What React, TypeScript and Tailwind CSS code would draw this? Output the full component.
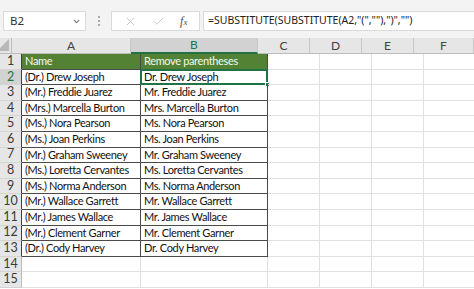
import { Check, X, ChevronDown } from "lucide-react";

const cols = [
  { key: "A", w: "w-[119px]" },
  { key: "B", w: "w-[127px]" },
  { key: "C", w: "w-[52px]" },
  { key: "D", w: "w-[52px]" },
  { key: "E", w: "w-[52px]" },
  { key: "F", w: "w-[60px]" },
];

const names = [
  ["Name", "Remove parentheses"],
  ["(Dr.) Drew Joseph", "Dr. Drew Joseph"],
  ["(Mr.) Freddie Juarez", "Mr. Freddie Juarez"],
  ["(Mrs.) Marcella Burton", "Mrs. Marcella Burton"],
  ["(Ms.) Nora Pearson", "Ms. Nora Pearson"],
  ["(Ms.) Joan Perkins", "Ms. Joan Perkins"],
  ["(Mr.) Graham Sweeney", "Mr. Graham Sweeney"],
  ["(Ms.) Loretta Cervantes", "Ms. Loretta Cervantes"],
  ["(Ms.) Norma Anderson", "Ms. Norma Anderson"],
  ["(Mr.) Wallace Garrett", "Mr. Wallace Garrett"],
  ["(Mr.) James Wallace", "Mr. James Wallace"],
  ["(Mr.) Clement Garner", "Mr. Clement Garner"],
  ["(Dr.) Cody Harvey", "Dr. Cody Harvey"],
];

const cellFont = { fontFamily: "Lato, 'Liberation Sans', sans-serif" };

const FormulaBar = () => (
  <div className="h-[38px] bg-[#f3f3f3] flex items-center pt-[4px] pl-[3px] font-['Noto_Sans',sans-serif]">
    <div className="w-[83px] h-[20px] bg-white border border-[#dadada] flex items-center justify-between pl-[6px] pr-[4px] text-[11.5px] text-[#333]">
      <span>B2</span>
      <ChevronDown size={9} strokeWidth={3} className="text-[#777]" />
    </div>
    <div className="w-[25px] flex flex-col items-center gap-[2px]">
      <span className="w-[2px] h-[2px] bg-[#aaa]" />
      <span className="w-[2px] h-[2px] bg-[#aaa]" />
      <span className="w-[2px] h-[2px] bg-[#aaa]" />
    </div>
    <div className="w-[89px] h-[20px] bg-white border border-[#dadada] flex items-center justify-around px-[4px]">
      <X size={13} strokeWidth={1.3} className="text-[#b0b0b0]" />
      <Check size={13} strokeWidth={1.3} className="text-[#b0b0b0]" />
      <span className="text-[12px] italic text-[#555] font-['Liberation_Serif',serif]">
        f<span className="text-[9px]">x</span>
      </span>
    </div>
    <div className="flex-1 h-[20px] ml-[3px] bg-white border border-[#dadada] border-r-0 flex items-center pl-[4px] text-[10.5px] text-[#222] whitespace-nowrap">
      =SUBSTITUTE(SUBSTITUTE(A2,"(",""),")","")
    </div>
  </div>
);

const HeaderRow = () => (
  <div className="flex h-[16px] bg-[#e6e6e6] text-[12px] text-[#444]" style={cellFont}>
    <div className="w-[22px] border-r border-b border-[#bcbcbc] relative">
      <svg className="absolute right-[2px] bottom-[2px]" width="12" height="12" viewBox="0 0 12 12">
        <polygon points="12,0 12,12 0,12" fill="#b8b8b8" />
      </svg>
    </div>
    {cols.map((c) => (
      <div
        key={c.key}
        className={`${c.w} shrink-0 flex items-center justify-center border-r border-[#c8c8c8] ${
          c.key === "B"
            ? "bg-[#d2d2d2] text-[#217346] border-b-2 border-b-[#217346]"
            : "border-b border-b-[#bcbcbc]"
        }`}
      >
        {c.key}
      </div>
    ))}
  </div>
);

const App = () => {
  return (
    <div className="w-[474px] h-[289px] overflow-hidden bg-white">
      <FormulaBar />
      <HeaderRow />
      {Array.from({ length: 15 }).map((_, i) => {
        const r = i + 1;
        const inTable = r <= 13;
        const row = names[i];
        return (
          <div key={r} className="flex h-[15.6px]" style={cellFont}>
            <div
              className={`w-[22px] shrink-0 flex items-center justify-center text-[12.5px] border-b border-[#d4d4d4] ${
                r === 2 ? "bg-[#d2d2d2] text-[#217346]" : "bg-[#e6e6e6] text-[#3a3a3a]"
              } ${inTable ? "border-r border-r-[#404040]" : "border-r border-r-[#bcbcbc]"}`}
            >
              {r}
            </div>
            {cols.map((c, ci) => {
              const data = ci < 2 && inTable;
              const head = r === 1 && data;
              return (
                <div
                  key={c.key}
                  className={`${c.w} shrink-0 flex items-center pl-[3px] text-[11px] tracking-[-0.35px] whitespace-nowrap border-r border-b relative ${
                    data ? "border-[#4a4a4a]" : "border-[#e1e1e1]"
                  } ${head ? "bg-[#548235] text-[#f4f9ef]" : "text-[#111]"}`}
                >
                  {data ? row[ci] : ""}
                  {r === 2 && c.key === "B" && (
                    <>
                      <div className="absolute -left-[1px] -top-[1px] right-[-1px] bottom-[-1px] border-2 border-[#217346]" />
                      <div className="absolute right-[-3px] bottom-[-3px] w-[5px] h-[5px] bg-[#217346] border border-white" />
                    </>
                  )}
                </div>
              );
            })}
          </div>
        );
      })}
    </div>
  );
};

export default App;
